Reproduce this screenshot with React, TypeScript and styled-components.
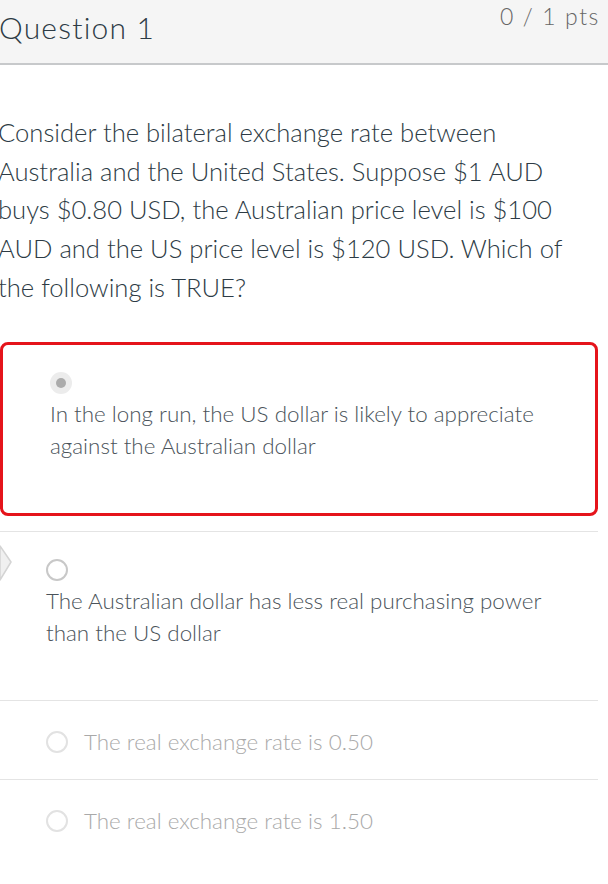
import styled, { createGlobalStyle } from "styled-components"

const GlobalStyle = createGlobalStyle`
    body {
        margin: 0;
        background: #fff;
        font-family: Lato, "Open Sans", sans-serif;
        font-weight: 300;
        color: #2d3b45;
    }
`

const Page = styled.div`
    width: 608px;
    min-height: 884px;
    overflow: hidden;
`

const Header = styled.header`
    height: 63px;
    background: #f5f5f5;
    border-bottom: 2px solid #c7c9cb;
    display: flex;
    justify-content: space-between;
    align-items: flex-start;
`

const Title = styled.h2`
    margin: 9px 0 0 -1px;
    font-size: 30px;
    font-weight: 300;
    letter-spacing: 1.2px;
    line-height: 36px;
    color: #2d3b45;
`

const Points = styled.span`
    margin: 2px 8px 0 0;
    font-size: 23px;
    font-weight: 300;
    letter-spacing: 1.6px;
    line-height: 28px;
    color: #666;
`

const Body = styled.section`
    width: 598px;
`

const QuestionText = styled.p`
    margin: 48px 0 35px -2px;
    width: 590px;
    font-size: 25.6px;
    line-height: 38.7px;
    color: #2d3b45;
`

const AnswerRow = styled.div<{ $pad?: number; $last?: boolean }>`
    position: relative;
    padding-bottom: ${(p) => p.$pad ?? 0}px;
    border-bottom: ${(p) => (p.$last ? "none" : "1px solid #e4e4e4")};
`

const AnswerBox = styled.div<{ $selected?: boolean; $inline?: boolean }>`
    display: flex;
    flex-direction: ${(p) => (p.$inline ? "row" : "column")};
    align-items: ${(p) => (p.$inline ? "center" : "flex-start")};
    gap: ${(p) => (p.$inline ? "16px" : "4px")};
    border: ${(p) => (p.$selected ? "3px solid #e5141b" : "none")};
    border-radius: 8px;
    padding: ${(p) =>
        p.$selected
            ? "27px 20px 51px 47px"
            : p.$inline
              ? "25px 20px 21px 46px"
              : "27px 20px 51px 46px"};
`

const Radio = styled.span<{ $checked?: boolean; $faded?: boolean }>`
    flex: none;
    width: 22px;
    height: 22px;
    box-sizing: border-box;
    border-radius: 50%;
    display: flex;
    align-items: center;
    justify-content: center;
    background: ${(p) => (p.$checked ? "#ececec" : "#fff")};
    border: ${(p) =>
        p.$checked ? "none" : p.$faded ? "2px solid #e2e2e2" : "2px solid #c8c8c8"};

    &::after {
        content: "";
        display: ${(p) => (p.$checked ? "block" : "none")};
        width: 10px;
        height: 10px;
        border-radius: 50%;
        background: #ababab;
    }
`

const AnswerText = styled.div<{ $faded?: boolean }>`
    font-size: 22.4px;
    line-height: 32px;
    color: ${(p) => (p.$faded ? "#a9a9a9" : "#4a535a")};
`

const Pointer = styled.svg`
    position: absolute;
    left: 0;
    top: 12px;
`

export default function App() {
    return (
        <Page>
            <GlobalStyle />
            <Header>
                <Title>Question 1</Title>
                <Points>0 / 1 pts</Points>
            </Header>

            <Body>
                <QuestionText>
                    Consider the bilateral exchange rate between Australia and the United States. Suppose $1 AUD buys $0.80 USD, the Australian price level is $100 AUD and the US price level is $120 USD. Which of the following is TRUE?
                </QuestionText>

                <AnswerRow $pad={15}>
                    <AnswerBox $selected>
                        <Radio $checked />
                        <AnswerText>
                            In the long run, the US dollar is likely to appreciate against the Australian dollar
                        </AnswerText>
                    </AnswerBox>
                </AnswerRow>

                <AnswerRow>
                    <Pointer width="14" height="40" viewBox="0 0 14 40">
                        <path d="M0 2 L11 18 L0 36 Z" fill="#f0f0f0" stroke="#d4d4d4" strokeWidth="1.5" strokeLinejoin="round" />
                    </Pointer>
                    <AnswerBox>
                        <Radio />
                        <AnswerText>
                            The Australian dollar has less real purchasing power than the US dollar
                        </AnswerText>
                    </AnswerBox>
                </AnswerRow>

                <AnswerRow>
                    <AnswerBox $inline>
                        <Radio $faded />
                        <AnswerText $faded>The real exchange rate is 0.50</AnswerText>
                    </AnswerBox>
                </AnswerRow>

                <AnswerRow $last>
                    <AnswerBox $inline>
                        <Radio $faded />
                        <AnswerText $faded>The real exchange rate is 1.50</AnswerText>
                    </AnswerBox>
                </AnswerRow>
            </Body>
        </Page>
    )
}
